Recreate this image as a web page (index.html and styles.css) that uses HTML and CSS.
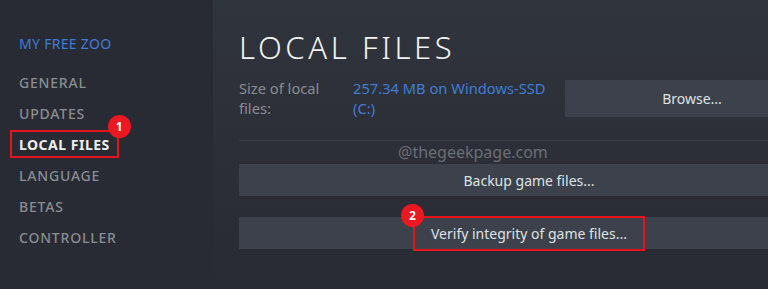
FILE: index.html
```html
<!DOCTYPE html>
<html>
<head>
<meta charset="utf-8">
<link rel="stylesheet" href="styles.css">
</head>
<body>
<div class="app">
  <nav class="sidebar">
    <div class="game">MY FREE ZOO</div>
    <div class="item">GENERAL</div>
    <div class="item">UPDATES</div>
    <div class="item"><span class="active">LOCAL FILES<span class="badge b1">1</span></span></div>
    <div class="item">LANGUAGE</div>
    <div class="item">BETAS</div>
    <div class="item">CONTROLLER</div>
  </nav>
  <main class="main">
    <h1 class="title">LOCAL FILES</h1>
    <div class="sizerow">
      <div class="label">Size of local<br>files:</div>
      <div class="value">257.34 MB on Windows-SSD (C:)</div>
      <button class="btn browse">Browse...</button>
    </div>
    <div class="sep"></div>
    <div class="watermark">@thegeekpage.com</div>
    <button class="btn wide">Backup game files...</button>
    <button class="btn wide verify"><span class="mark">Verify integrity of game files...<span class="badge b2">2</span></span></button>
  </main>
</div>
</body>
</html>
```

FILE: styles.css
```css
html, body {
  margin: 0;
  padding: 0;
  width: 768px;
  height: 289px;
  overflow: hidden;
  background: #2a2d35;
  font-family: "Noto Sans", "Open Sans", sans-serif;
}
.app {
  display: flex;
  height: 289px;
}
.sidebar {
  width: 213px;
  flex: none;
  background: #282b33;
  padding: 28px 0 0 19px;
  box-sizing: border-box;
}
.game {
  color: #3f7dd6;
  font-size: 14px;
  line-height: 31px;
  letter-spacing: 0.3px;
  margin-bottom: 8px;
}
.item {
  color: #8a8d94;
  font-size: 14px;
  font-weight: 500;
  line-height: 31px;
  letter-spacing: 0.8px;
}
.active {
  position: relative;
  display: inline-block;
  color: #eeeeee;
  font-weight: 700;
  letter-spacing: 0.5px;
}
.active::before {
  content: "";
  position: absolute;
  left: -9px;
  right: -9px;
  top: 1px;
  bottom: 2px;
  border: 2px solid #e5131b;
}
.badge {
  position: absolute;
  width: 23px;
  height: 23px;
  border-radius: 50%;
  background: #ea1820;
  color: #fff;
  font-size: 12px;
  font-weight: 700;
  line-height: 23px;
  text-align: center;
  letter-spacing: 0;
}
.b1 {
  right: -21px;
  top: -14px;
}
.main {
  width: 580px;
  flex: none;
  padding: 27px 0 0 26px;
  display: flex;
  flex-direction: column;
  background: linear-gradient(180deg, #30343c 0%, #2c2f37 50%, #282b33 100%);
}
.title {
  margin: 0;
  font-size: 31px;
  font-weight: 300;
  line-height: 40px;
  letter-spacing: 3.6px;
  color: #f2f2f2;
}
.sizerow {
  display: flex;
  align-items: flex-start;
  margin-top: 11px;
  font-size: 14.7px;
  line-height: 20px;
}
.label {
  width: 114px;
  color: #8a8d94;
}
.value {
  width: 200px;
  color: #3f7dd6;
}
.btn {
  border: none;
  margin: 0;
  padding: 0;
  background: #3c414c;
  color: #dfe1e3;
  font-family: inherit;
  font-size: 14px;
  text-align: center;
}
.browse {
  margin-top: 2px;
  margin-left: 12px;
  flex: 1;
  height: 37px;
}
.sep {
  height: 1px;
  background: #3a3e47;
  margin-top: 22px;
}
.watermark {
  height: 23px;
  line-height: 23px;
  padding-left: 159px;
  color: #6a6e76;
  font-size: 16px;
}
.wide {
  height: 32px;
  width: 100%;
}
.verify {
  margin-top: 21px;
}
.mark {
  position: relative;
  display: inline-block;
}
.mark::before {
  content: "";
  position: absolute;
  left: -18px;
  right: -18px;
  top: -8px;
  bottom: -8px;
  border: 2px solid #e5131b;
}
.b2 {
  left: -30px;
  top: -20px;
}
```
